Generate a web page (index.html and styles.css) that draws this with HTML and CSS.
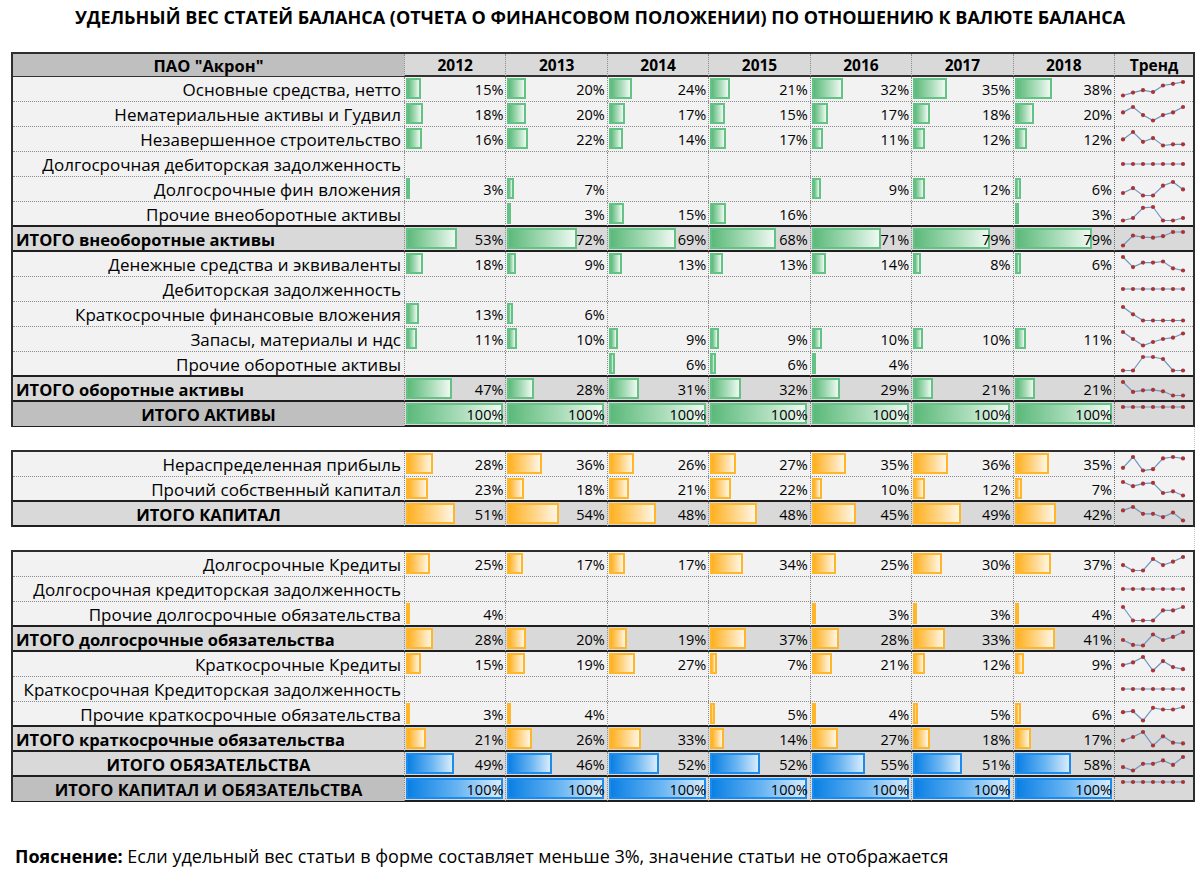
FILE: index.html
```html
<!DOCTYPE html>
<html lang="ru">
<head>
<meta charset="utf-8">
<title>Удельный вес статей баланса</title>
<link rel="stylesheet" href="styles.css">
</head>
<body>
<svg class="defs" width="0" height="0" aria-hidden="true">
  <defs>
    <marker id="dot" viewBox="0 0 6 6" refX="3" refY="3" markerWidth="6" markerHeight="6" markerUnits="userSpaceOnUse">
      <circle cx="3" cy="3" r="2.1" fill="#a83434"/>
    </marker>
  </defs>
</svg>
<h1 class="title">УДЕЛЬНЫЙ ВЕС СТАТЕЙ БАЛАНСА (ОТЧЕТА О ФИНАНСОВОМ ПОЛОЖЕНИИ) ПО ОТНОШЕНИЮ К ВАЛЮТЕ БАЛАНСА</h1>
<div class="sheet">
  <div class="block">
    <div class="row head">
      <div class="lbl center dark">ПАО "Акрон"</div>
      <div class="yr">2012</div><div class="yr">2013</div><div class="yr">2014</div><div class="yr">2015</div><div class="yr">2016</div><div class="yr">2017</div><div class="yr">2018</div>
      <div class="yr">Тренд</div>
    </div>

    <div class="row">
      <div class="lbl">Основные средства, нетто</div>
      <div class="v"><span class="bar g" style="width:15px"></span><span class="n">15%</span></div>
      <div class="v"><span class="bar g" style="width:19px"></span><span class="n">20%</span></div>
      <div class="v"><span class="bar g" style="width:23px"></span><span class="n">24%</span></div>
      <div class="v"><span class="bar g" style="width:20px"></span><span class="n">21%</span></div>
      <div class="v"><span class="bar g" style="width:31px"></span><span class="n">32%</span></div>
      <div class="v"><span class="bar g" style="width:34px"></span><span class="n">35%</span></div>
      <div class="v"><span class="bar g" style="width:37px"></span><span class="n">38%</span></div>
      <div class="tr"><svg class="spark" viewBox="0 0 79 24"><polyline points="8,18.5 18,15.6 28,13.2 38,15 48,8.5 58,6.8 68,5"/></svg></div>
    </div>
    <div class="row">
      <div class="lbl">Нематериальные активы и Гудвил</div>
      <div class="v"><span class="bar g" style="width:17px"></span><span class="n">18%</span></div>
      <div class="v"><span class="bar g" style="width:19px"></span><span class="n">20%</span></div>
      <div class="v"><span class="bar g" style="width:16px"></span><span class="n">17%</span></div>
      <div class="v"><span class="bar g" style="width:15px"></span><span class="n">15%</span></div>
      <div class="v"><span class="bar g" style="width:16px"></span><span class="n">17%</span></div>
      <div class="v"><span class="bar g" style="width:17px"></span><span class="n">18%</span></div>
      <div class="v"><span class="bar g" style="width:19px"></span><span class="n">20%</span></div>
      <div class="tr"><svg class="spark" viewBox="0 0 79 24"><polyline points="8,10.4 18,5 28,13.1 38,18.5 48,13.1 58,10.4 68,5"/></svg></div>
    </div>
    <div class="row">
      <div class="lbl">Незавершенное строительство</div>
      <div class="v"><span class="bar g" style="width:16px"></span><span class="n">16%</span></div>
      <div class="v"><span class="bar g" style="width:21px"></span><span class="n">22%</span></div>
      <div class="v"><span class="bar g" style="width:14px"></span><span class="n">14%</span></div>
      <div class="v"><span class="bar g" style="width:16px"></span><span class="n">17%</span></div>
      <div class="v"><span class="bar g" style="width:11px"></span><span class="n">11%</span></div>
      <div class="v"><span class="bar g" style="width:12px"></span><span class="n">12%</span></div>
      <div class="v"><span class="bar g" style="width:12px"></span><span class="n">12%</span></div>
      <div class="tr"><svg class="spark" viewBox="0 0 79 24"><polyline points="8,12.4 18,5 28,14.8 38,11.1 48,18.5 58,17.3 68,17.3"/></svg></div>
    </div>
    <div class="row">
      <div class="lbl">Долгосрочная дебиторская задолженность</div>
      <div class="v"></div><div class="v"></div><div class="v"></div><div class="v"></div><div class="v"></div><div class="v"></div><div class="v"></div>
      <div class="tr"><svg class="spark" viewBox="0 0 79 24"><polyline points="8,12 18,12 28,12 38,12 48,12 58,12 68,12"/></svg></div>
    </div>
    <div class="row">
      <div class="lbl">Долгосрочные фин вложения</div>
      <div class="v"><span class="bar g" style="width:4px"></span><span class="n">3%</span></div>
      <div class="v"><span class="bar g" style="width:7px"></span><span class="n">7%</span></div>
      <div class="v"></div>
      <div class="v"></div>
      <div class="v"><span class="bar g" style="width:9px"></span><span class="n">9%</span></div>
      <div class="v"><span class="bar g" style="width:12px"></span><span class="n">12%</span></div>
      <div class="v"><span class="bar g" style="width:6px"></span><span class="n">6%</span></div>
      <div class="tr"><svg class="spark" viewBox="0 0 79 24"><polyline points="8,16 18,11.1 28,18.5 38,18.5 48,8.7 58,5 68,12.4"/></svg></div>
    </div>
    <div class="row thick">
      <div class="lbl">Прочие внеоборотные активы</div>
      <div class="v"></div>
      <div class="v"><span class="bar g" style="width:4px"></span><span class="n">3%</span></div>
      <div class="v"><span class="bar g" style="width:15px"></span><span class="n">15%</span></div>
      <div class="v"><span class="bar g" style="width:16px"></span><span class="n">16%</span></div>
      <div class="v"></div>
      <div class="v"></div>
      <div class="v"><span class="bar g" style="width:4px"></span><span class="n">3%</span></div>
      <div class="tr"><svg class="spark" viewBox="0 0 79 24"><polyline points="8,18.5 18,16 28,5.8 38,5 48,18.5 58,18.5 68,16"/></svg></div>
    </div>
    <div class="row sum thick">
      <div class="lbl left">ИТОГО внеоборотные активы</div>
      <div class="v"><span class="bar g" style="width:51px"></span><span class="n">53%</span></div>
      <div class="v"><span class="bar g" style="width:70px"></span><span class="n">72%</span></div>
      <div class="v"><span class="bar g" style="width:67px"></span><span class="n">69%</span></div>
      <div class="v"><span class="bar g" style="width:66px"></span><span class="n">68%</span></div>
      <div class="v"><span class="bar g" style="width:69px"></span><span class="n">71%</span></div>
      <div class="v"><span class="bar g" style="width:77px"></span><span class="n">79%</span></div>
      <div class="v"><span class="bar g" style="width:77px"></span><span class="n">79%</span></div>
      <div class="tr"><svg class="spark" viewBox="0 0 79 24"><polyline points="8,18.5 18,8.6 28,10.2 38,10.7 48,9.2 58,5 68,5"/></svg></div>
    </div>
    <div class="row">
      <div class="lbl">Денежные средства и эквиваленты</div>
      <div class="v"><span class="bar g" style="width:17px"></span><span class="n">18%</span></div>
      <div class="v"><span class="bar g" style="width:9px"></span><span class="n">9%</span></div>
      <div class="v"><span class="bar g" style="width:13px"></span><span class="n">13%</span></div>
      <div class="v"><span class="bar g" style="width:13px"></span><span class="n">13%</span></div>
      <div class="v"><span class="bar g" style="width:14px"></span><span class="n">14%</span></div>
      <div class="v"><span class="bar g" style="width:8px"></span><span class="n">8%</span></div>
      <div class="v"><span class="bar g" style="width:6px"></span><span class="n">6%</span></div>
      <div class="tr"><svg class="spark" viewBox="0 0 79 24"><polyline points="8,5 18,15.1 28,10.6 38,10.6 48,9.5 58,16.3 68,18.5"/></svg></div>
    </div>
    <div class="row">
      <div class="lbl">Дебиторская задолженность</div>
      <div class="v"></div><div class="v"></div><div class="v"></div><div class="v"></div><div class="v"></div><div class="v"></div><div class="v"></div>
      <div class="tr"><svg class="spark" viewBox="0 0 79 24"><polyline points="8,12 18,12 28,12 38,12 48,12 58,12 68,12"/></svg></div>
    </div>
    <div class="row">
      <div class="lbl">Краткосрочные финансовые вложения</div>
      <div class="v"><span class="bar g" style="width:13px"></span><span class="n">13%</span></div>
      <div class="v"><span class="bar g" style="width:6px"></span><span class="n">6%</span></div>
      <div class="v"></div><div class="v"></div><div class="v"></div><div class="v"></div><div class="v"></div>
      <div class="tr"><svg class="spark" viewBox="0 0 79 24"><polyline points="8,5 18,12.3 28,18.5 38,18.5 48,18.5 58,18.5 68,18.5"/></svg></div>
    </div>
    <div class="row">
      <div class="lbl">Запасы, материалы и ндс</div>
      <div class="v"><span class="bar g" style="width:11px"></span><span class="n">11%</span></div>
      <div class="v"><span class="bar g" style="width:10px"></span><span class="n">10%</span></div>
      <div class="v"><span class="bar g" style="width:9px"></span><span class="n">9%</span></div>
      <div class="v"><span class="bar g" style="width:9px"></span><span class="n">9%</span></div>
      <div class="v"><span class="bar g" style="width:10px"></span><span class="n">10%</span></div>
      <div class="v"><span class="bar g" style="width:10px"></span><span class="n">10%</span></div>
      <div class="v"><span class="bar g" style="width:11px"></span><span class="n">11%</span></div>
      <div class="tr"><svg class="spark" viewBox="0 0 79 24"><polyline points="8,5 18,12 28,18.5 38,15 48,12 58,10.7 68,6.5"/></svg></div>
    </div>
    <div class="row thick">
      <div class="lbl">Прочие оборотные активы</div>
      <div class="v"></div>
      <div class="v"></div>
      <div class="v"><span class="bar g" style="width:6px"></span><span class="n">6%</span></div>
      <div class="v"><span class="bar g" style="width:6px"></span><span class="n">6%</span></div>
      <div class="v"><span class="bar g" style="width:4px"></span><span class="n">4%</span></div>
      <div class="v"></div>
      <div class="v"></div>
      <div class="tr"><svg class="spark" viewBox="0 0 79 24"><polyline points="8,18.5 18,18.5 28,5 38,5 48,7 58,18.5 68,18.5"/></svg></div>
    </div>
    <div class="row sum thick">
      <div class="lbl left">ИТОГО оборотные активы</div>
      <div class="v"><span class="bar g" style="width:46px"></span><span class="n">47%</span></div>
      <div class="v"><span class="bar g" style="width:27px"></span><span class="n">28%</span></div>
      <div class="v"><span class="bar g" style="width:30px"></span><span class="n">31%</span></div>
      <div class="v"><span class="bar g" style="width:31px"></span><span class="n">32%</span></div>
      <div class="v"><span class="bar g" style="width:28px"></span><span class="n">29%</span></div>
      <div class="v"><span class="bar g" style="width:20px"></span><span class="n">21%</span></div>
      <div class="v"><span class="bar g" style="width:20px"></span><span class="n">21%</span></div>
      <div class="tr"><svg class="spark" viewBox="0 0 79 24"><polyline points="8,5 18,14.9 28,13.3 38,12.8 48,14.3 58,18.5 68,18.5"/></svg></div>
    </div>
    <div class="row sum thick">
      <div class="lbl center dark">ИТОГО АКТИВЫ</div>
      <div class="v"><span class="bar g" style="width:97px"></span><span class="n">100%</span></div>
      <div class="v"><span class="bar g" style="width:97px"></span><span class="n">100%</span></div>
      <div class="v"><span class="bar g" style="width:97px"></span><span class="n">100%</span></div>
      <div class="v"><span class="bar g" style="width:97px"></span><span class="n">100%</span></div>
      <div class="v"><span class="bar g" style="width:97px"></span><span class="n">100%</span></div>
      <div class="v"><span class="bar g" style="width:97px"></span><span class="n">100%</span></div>
      <div class="v"><span class="bar g" style="width:97px"></span><span class="n">100%</span></div>
      <div class="tr"><svg class="spark" viewBox="0 0 79 24"><polyline points="8,5 18,5 28,5 38,5 48,5 58,5 68,5"/></svg></div>
    </div>
  </div>

  <div class="gap"></div>

  <div class="block">
    <div class="row">
      <div class="lbl">Нераспределенная прибыль</div>
      <div class="v"><span class="bar o" style="width:27px"></span><span class="n">28%</span></div>
      <div class="v"><span class="bar o" style="width:35px"></span><span class="n">36%</span></div>
      <div class="v"><span class="bar o" style="width:25px"></span><span class="n">26%</span></div>
      <div class="v"><span class="bar o" style="width:26px"></span><span class="n">27%</span></div>
      <div class="v"><span class="bar o" style="width:34px"></span><span class="n">35%</span></div>
      <div class="v"><span class="bar o" style="width:35px"></span><span class="n">36%</span></div>
      <div class="v"><span class="bar o" style="width:34px"></span><span class="n">35%</span></div>
      <div class="tr"><svg class="spark" viewBox="0 0 79 24"><polyline points="8,15.8 18,5 28,18.5 38,17.2 48,6.4 58,5 68,6.4"/></svg></div>
    </div>
    <div class="row thick">
      <div class="lbl">Прочий собственный капитал</div>
      <div class="v"><span class="bar o" style="width:22px"></span><span class="n">23%</span></div>
      <div class="v"><span class="bar o" style="width:17px"></span><span class="n">18%</span></div>
      <div class="v"><span class="bar o" style="width:20px"></span><span class="n">21%</span></div>
      <div class="v"><span class="bar o" style="width:21px"></span><span class="n">22%</span></div>
      <div class="v"><span class="bar o" style="width:10px"></span><span class="n">10%</span></div>
      <div class="v"><span class="bar o" style="width:12px"></span><span class="n">12%</span></div>
      <div class="v"><span class="bar o" style="width:7px"></span><span class="n">7%</span></div>
      <div class="tr"><svg class="spark" viewBox="0 0 79 24"><polyline points="8,5 18,9.2 28,6.7 38,5.8 48,16 58,14.3 68,18.5"/></svg></div>
    </div>
    <div class="row sum thick">
      <div class="lbl center">ИТОГО КАПИТАЛ</div>
      <div class="v"><span class="bar o" style="width:49px"></span><span class="n">51%</span></div>
      <div class="v"><span class="bar o" style="width:52px"></span><span class="n">54%</span></div>
      <div class="v"><span class="bar o" style="width:47px"></span><span class="n">48%</span></div>
      <div class="v"><span class="bar o" style="width:47px"></span><span class="n">48%</span></div>
      <div class="v"><span class="bar o" style="width:44px"></span><span class="n">45%</span></div>
      <div class="v"><span class="bar o" style="width:48px"></span><span class="n">49%</span></div>
      <div class="v"><span class="bar o" style="width:41px"></span><span class="n">42%</span></div>
      <div class="tr"><svg class="spark" viewBox="0 0 79 24"><polyline points="8,8.4 18,5 28,11.8 38,11.8 48,15.1 58,10.6 68,18.5"/></svg></div>
    </div>
  </div>

  <div class="gap"></div>

  <div class="block">
    <div class="row">
      <div class="lbl">Долгосрочные Кредиты</div>
      <div class="v"><span class="bar o" style="width:24px"></span><span class="n">25%</span></div>
      <div class="v"><span class="bar o" style="width:16px"></span><span class="n">17%</span></div>
      <div class="v"><span class="bar o" style="width:16px"></span><span class="n">17%</span></div>
      <div class="v"><span class="bar o" style="width:33px"></span><span class="n">34%</span></div>
      <div class="v"><span class="bar o" style="width:24px"></span><span class="n">25%</span></div>
      <div class="v"><span class="bar o" style="width:29px"></span><span class="n">30%</span></div>
      <div class="v"><span class="bar o" style="width:36px"></span><span class="n">37%</span></div>
      <div class="tr"><svg class="spark" viewBox="0 0 79 24"><polyline points="8,13.1 18,18.5 28,18.5 38,7 48,13.1 58,9.7 68,5"/></svg></div>
    </div>
    <div class="row">
      <div class="lbl">Долгосрочная кредиторская задолженность</div>
      <div class="v"></div><div class="v"></div><div class="v"></div><div class="v"></div><div class="v"></div><div class="v"></div><div class="v"></div>
      <div class="tr"><svg class="spark" viewBox="0 0 79 24"><polyline points="8,12 18,12 28,12 38,12 48,12 58,12 68,12"/></svg></div>
    </div>
    <div class="row thick">
      <div class="lbl">Прочие долгосрочные обязательства</div>
      <div class="v"><span class="bar o" style="width:4px"></span><span class="n">4%</span></div>
      <div class="v"></div>
      <div class="v"></div>
      <div class="v"></div>
      <div class="v"><span class="bar o" style="width:4px"></span><span class="n">3%</span></div>
      <div class="v"><span class="bar o" style="width:4px"></span><span class="n">3%</span></div>
      <div class="v"><span class="bar o" style="width:4px"></span><span class="n">4%</span></div>
      <div class="tr"><svg class="spark" viewBox="0 0 79 24"><polyline points="8,5 18,18.5 28,18.5 38,18.5 48,8.4 58,8.4 68,5"/></svg></div>
    </div>
    <div class="row sum thick">
      <div class="lbl left">ИТОГО долгосрочные обязательства</div>
      <div class="v"><span class="bar o" style="width:27px"></span><span class="n">28%</span></div>
      <div class="v"><span class="bar o" style="width:19px"></span><span class="n">20%</span></div>
      <div class="v"><span class="bar o" style="width:18px"></span><span class="n">19%</span></div>
      <div class="v"><span class="bar o" style="width:36px"></span><span class="n">37%</span></div>
      <div class="v"><span class="bar o" style="width:27px"></span><span class="n">28%</span></div>
      <div class="v"><span class="bar o" style="width:32px"></span><span class="n">33%</span></div>
      <div class="v"><span class="bar o" style="width:40px"></span><span class="n">41%</span></div>
      <div class="tr"><svg class="spark" viewBox="0 0 79 24"><polyline points="8,13 18,17.9 28,18.5 38,7.5 48,13 58,9.9 68,5"/></svg></div>
    </div>
    <div class="row">
      <div class="lbl">Краткосрочные Кредиты</div>
      <div class="v"><span class="bar o" style="width:15px"></span><span class="n">15%</span></div>
      <div class="v"><span class="bar o" style="width:18px"></span><span class="n">19%</span></div>
      <div class="v"><span class="bar o" style="width:26px"></span><span class="n">27%</span></div>
      <div class="v"><span class="bar o" style="width:7px"></span><span class="n">7%</span></div>
      <div class="v"><span class="bar o" style="width:20px"></span><span class="n">21%</span></div>
      <div class="v"><span class="bar o" style="width:12px"></span><span class="n">12%</span></div>
      <div class="v"><span class="bar o" style="width:9px"></span><span class="n">9%</span></div>
      <div class="tr"><svg class="spark" viewBox="0 0 79 24"><polyline points="8,13.1 18,10.4 28,5 38,18.5 48,9.1 58,15.1 68,17.2"/></svg></div>
    </div>
    <div class="row">
      <div class="lbl">Краткосрочная Кредиторская задолженность</div>
      <div class="v"></div><div class="v"></div><div class="v"></div><div class="v"></div><div class="v"></div><div class="v"></div><div class="v"></div>
      <div class="tr"><svg class="spark" viewBox="0 0 79 24"><polyline points="8,12 18,12 28,12 38,12 48,12 58,12 68,12"/></svg></div>
    </div>
    <div class="row thick">
      <div class="lbl">Прочие краткосрочные обязательства</div>
      <div class="v"><span class="bar o" style="width:4px"></span><span class="n">3%</span></div>
      <div class="v"><span class="bar o" style="width:4px"></span><span class="n">4%</span></div>
      <div class="v"></div>
      <div class="v"><span class="bar o" style="width:5px"></span><span class="n">5%</span></div>
      <div class="v"><span class="bar o" style="width:4px"></span><span class="n">4%</span></div>
      <div class="v"><span class="bar o" style="width:5px"></span><span class="n">5%</span></div>
      <div class="v"><span class="bar o" style="width:6px"></span><span class="n">6%</span></div>
      <div class="tr"><svg class="spark" viewBox="0 0 79 24"><polyline points="8,10.2 18,9.2 28,18.5 38,5.8 48,7.5 58,7.5 68,5"/></svg></div>
    </div>
    <div class="row sum thick">
      <div class="lbl left">ИТОГО краткосрочные обязательства</div>
      <div class="v"><span class="bar o" style="width:20px"></span><span class="n">21%</span></div>
      <div class="v"><span class="bar o" style="width:25px"></span><span class="n">26%</span></div>
      <div class="v"><span class="bar o" style="width:32px"></span><span class="n">33%</span></div>
      <div class="v"><span class="bar o" style="width:14px"></span><span class="n">14%</span></div>
      <div class="v"><span class="bar o" style="width:26px"></span><span class="n">27%</span></div>
      <div class="v"><span class="bar o" style="width:17px"></span><span class="n">18%</span></div>
      <div class="v"><span class="bar o" style="width:16px"></span><span class="n">17%</span></div>
      <div class="tr"><svg class="spark" viewBox="0 0 79 24"><polyline points="8,13.5 18,10 28,5 38,18.5 48,9.3 58,15.7 68,16.4"/></svg></div>
    </div>
    <div class="row sum thick">
      <div class="lbl center">ИТОГО ОБЯЗАТЕЛЬСТВА</div>
      <div class="v"><span class="bar b" style="width:48px"></span><span class="n">49%</span></div>
      <div class="v"><span class="bar b" style="width:45px"></span><span class="n">46%</span></div>
      <div class="v"><span class="bar b" style="width:50px"></span><span class="n">52%</span></div>
      <div class="v"><span class="bar b" style="width:50px"></span><span class="n">52%</span></div>
      <div class="v"><span class="bar b" style="width:53px"></span><span class="n">55%</span></div>
      <div class="v"><span class="bar b" style="width:49px"></span><span class="n">51%</span></div>
      <div class="v"><span class="bar b" style="width:56px"></span><span class="n">58%</span></div>
      <div class="tr"><svg class="spark" viewBox="0 0 79 24"><polyline points="8,15.1 18,18.5 28,11.8 38,11.8 48,8.4 58,12.9 68,5"/></svg></div>
    </div>
    <div class="row sum thick">
      <div class="lbl center dark">ИТОГО КАПИТАЛ И ОБЯЗАТЕЛЬСТВА</div>
      <div class="v"><span class="bar b" style="width:97px"></span><span class="n">100%</span></div>
      <div class="v"><span class="bar b" style="width:97px"></span><span class="n">100%</span></div>
      <div class="v"><span class="bar b" style="width:97px"></span><span class="n">100%</span></div>
      <div class="v"><span class="bar b" style="width:97px"></span><span class="n">100%</span></div>
      <div class="v"><span class="bar b" style="width:97px"></span><span class="n">100%</span></div>
      <div class="v"><span class="bar b" style="width:97px"></span><span class="n">100%</span></div>
      <div class="v"><span class="bar b" style="width:97px"></span><span class="n">100%</span></div>
      <div class="tr"><svg class="spark" viewBox="0 0 79 24"><polyline points="8,5 18,5 28,5 38,5 48,5 58,5 68,5"/></svg></div>
    </div>
  </div>
</div>
<p class="note"><b>Пояснение:</b> Если удельный вес статьи в форме составляет меньше 3%, значение статьи не отображается</p>
</body>
</html>
```

FILE: styles.css
```css
html, body {
  margin: 0;
  padding: 0;
  background: #ffffff;
}

body {
  font-family: "Open Sans", "Liberation Sans", sans-serif;
  font-size: 14.5px;
  color: #000000;
  width: 1200px;
}

.defs {
  position: absolute;
  width: 0;
  height: 0;
}

.title {
  margin: 0;
  height: 52px;
  line-height: 34px;
  text-align: center;
  font-size: 18px;
  font-weight: 700;
  white-space: nowrap;
}

.sheet {
  padding-left: 11px;
}

.block {
  width: 1184px;
  box-sizing: border-box;
  border: 2px solid #2e2e2e;
  border-bottom: none;
}

.gap {
  width: 1184px;
  height: 23px;
  box-sizing: border-box;
  border-right: 1px dotted #c4c4c4;
}

.row {
  display: grid;
  grid-template-columns: 391px repeat(7, 1fr) 79px;
  height: 25px;
  box-sizing: border-box;
  border-bottom: 1px dotted #8c8c8c;
  background: #f2f2f2;
  white-space: nowrap;
}

.row.thick {
  border-bottom: 2px solid #1f1f1f;
}

.row.head {
  height: 23px;
  border-bottom: 2px solid #333333;
  background: #d9d9d9;
  font-weight: 700;
  font-size: 15.5px;
}

.row.sum {
  background: #d9d9d9;
}

.lbl {
  display: flex;
  align-items: center;
  justify-content: flex-end;
  padding: 0 3px;
  overflow: hidden;
  font-size: 17px;
}

.row.sum .lbl,
.row.head .lbl {
  font-weight: 700;
  font-size: 16.5px;
}

.lbl.left {
  justify-content: flex-start;
}

.lbl.center {
  justify-content: center;
}

.lbl.dark {
  background: #bfbfbf;
}

.yr {
  display: flex;
  align-items: center;
  justify-content: center;
  border-left: 1px dotted #8c8c8c;
}

.v {
  display: grid;
  grid-template-columns: 1fr;
  grid-template-rows: 1fr;
  border-left: 1px dotted #8c8c8c;
  min-width: 0;
}

.v > * {
  grid-area: 1 / 1;
}

.bar {
  justify-self: start;
  align-self: stretch;
  margin: 1px 0 2px 1px;
  box-sizing: border-box;
  border: 2px solid #63c384;
}

.bar.g {
  border-color: #63c384;
  background: linear-gradient(90deg, #5cb97a 0%, #a8dcb8 55%, #f0f9f3 100%);
}

.bar.o {
  border-color: #ffb628;
  background: linear-gradient(90deg, #ffb020 0%, #ffd68a 55%, #fff6e6 100%);
}

.bar.b {
  border-color: #1a8cf0;
  background: linear-gradient(90deg, #0a80e4 0%, #6cb6f2 55%, #d8ecfc 100%);
}

.n {
  justify-self: end;
  align-self: center;
  padding-right: 2px;
}

.tr {
  border-left: 1px dotted #6e6e6e;
  min-width: 0;
}

.spark {
  display: block;
  width: 79px;
  height: 24px;
  overflow: visible;
}

.spark polyline {
  fill: none;
  stroke: #6f93c4;
  stroke-width: 1.2;
  marker-start: url(#dot);
  marker-mid: url(#dot);
  marker-end: url(#dot);
}

.note {
  margin: 41px 0 0 15px;
  line-height: 26px;
  font-size: 18px;
  white-space: nowrap;
}
```
